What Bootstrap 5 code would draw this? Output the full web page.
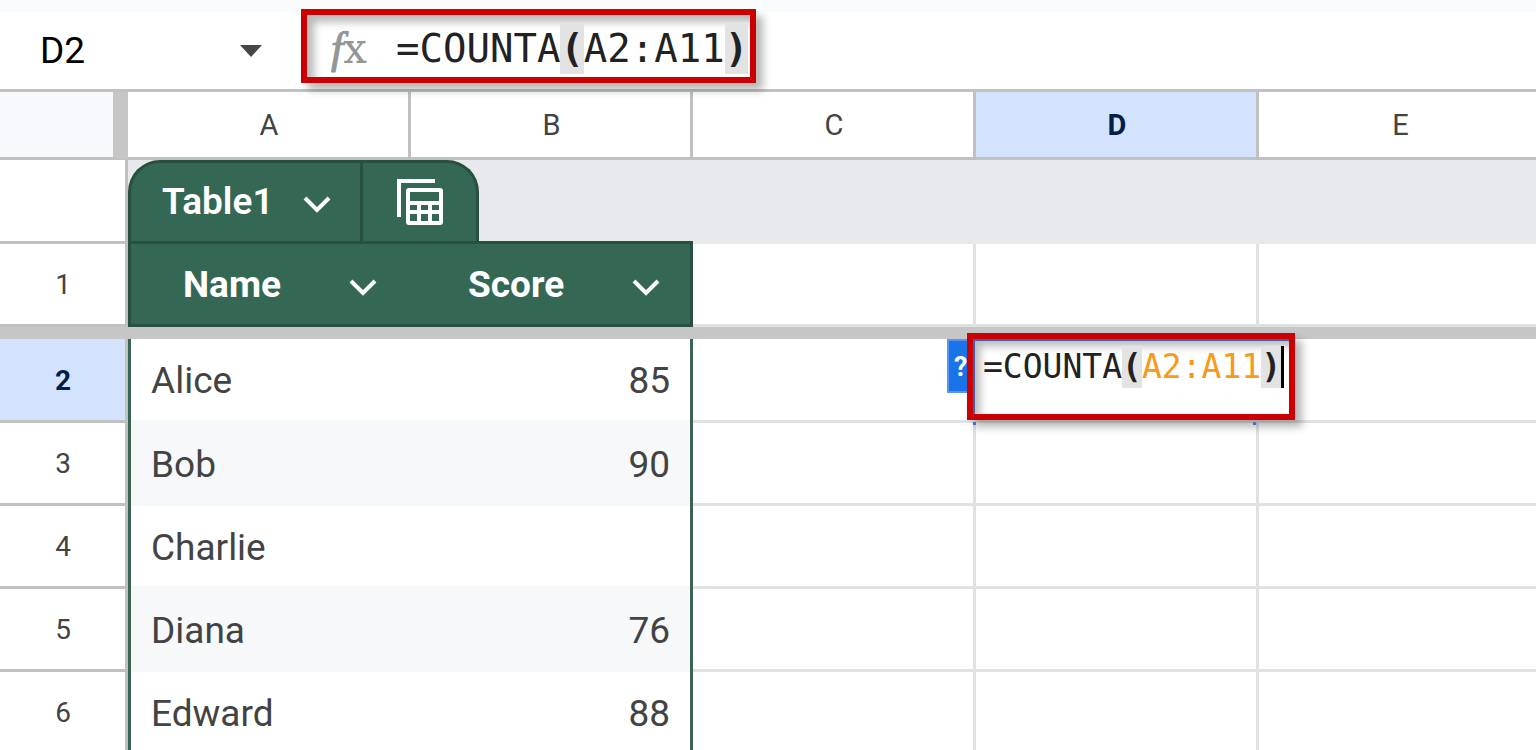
<!DOCTYPE html>
<html lang="en">
<head>
<meta charset="utf-8">
<meta name="viewport" content="width=device-width, initial-scale=1">
<title>Spreadsheet – COUNTA</title>
<link rel="stylesheet" href="https://cdn.jsdelivr.net/npm/bootstrap@5.3.0/dist/css/bootstrap.min.css">
<style>
  :root { --line: #c1c1c1; --grid: #e1e1e1; --green: #356854; --edge: #285040; --pick: #d3e2fd; --alert: #cc0000; }
  body { font-family: Roboto, "Liberation Sans", sans-serif; color: #434343; }
  .toolbar-edge { height: 12px; background: #f9fbfd; }
  .formula-bar { height: 80px; border-bottom: 3px solid var(--line); }
  .name-box { width: 301px; padding: 0 36px 0 40px; }
  .name-input { font-size: 37px; line-height: 48px; color: #000; min-width: 0; }
  .callout { border: 6px solid var(--alert); box-shadow: 7px 7px 8px rgba(0,0,0,.28), inset 7px 7px 8px rgba(0,0,0,.28); }
  .formula-box { height: 74px; margin-top: -3px; padding: 6px 2px 0 24px; }
  .fx-sign { font: italic 44px/48px "Liberation Serif", serif; color: #929694; width: 65px; -webkit-text-stroke: 1px #929694; }
  .fx-arg { font: 42px/48px "DejaVu Serif", serif; -webkit-text-stroke: 0; }
  .formula { font-family: "DejaVu Sans Mono", monospace; white-space: pre; outline: 0; color: #222; }
  .formula-lg { font-size: 39px; line-height: 50px; }
  .formula-md { font-size: 33px; line-height: 42px; }
  .paren { display: inline-block; background: #e3e3e3; font-weight: 700; }
  .range-ref { color: #f79a1c; }
  .sheet { table-layout: fixed; width: 100%; border-collapse: separate; border-spacing: 0; }
  .sheet th, .sheet td { padding: 0; vertical-align: middle; }
  .w-head { width: 128px; } .w-a { width: 283px; } .w-b { width: 282px; }
  .sheet thead th { height: 68px; padding-left: 2px; font-size: 29px; line-height: 36px; font-weight: 400; text-align: center; border-right: 3px solid var(--line); border-bottom: 3px solid var(--line); }
  .sheet thead .corner { background: #f8f9fc; border-right: 15px solid #c6c6c6; }
  .sheet thead th:last-child { padding-left: 6px; }
  .sheet tr > :last-child { border-right: 0; }
  .sheet tbody th { padding: 2px 0 0 1px; font-size: 28px; line-height: 36px; font-weight: 400; text-align: center; border-right: 3px solid var(--line); border-bottom: 3px solid var(--line); }
  .sheet thead .picked, .sheet tbody .picked { background: var(--pick); color: #041e49; font-weight: 700; }
  .band { height: 84px; background: #e8e9ed; }
  .band-tab { border-bottom: 3px solid var(--edge); }
  .sheet .band-tab { vertical-align: top; }
  .tab-pill { width: 351px; height: 81px; background: var(--green); border: 3px solid var(--edge); border-bottom: 0; border-radius: 32px 32px 0 0; overflow: hidden; }
  .tab-name { width: 232px; padding: 0 28px 0 31px; border-right: 3px solid var(--edge); font-size: 37px; line-height: 44px; font-weight: 600; }
  .chevron { margin-top: 4px; }
  .first-row > * { height: 83px; }
  .grid-cell { border-right: 3px solid var(--grid); border-bottom: 3px solid var(--grid); }
  .field { background: var(--green); border-bottom: 3px solid var(--edge); color: #fff; font-size: 37px; line-height: 44px; font-weight: 700; }
  .field-start { border-left: 3px solid var(--edge); } .field-end { border-right: 3px solid var(--edge); }
  .field > div { padding-top: 2px; }
  .field-start > div { padding-left: 52px; padding-right: 33px; } .field-end > div { padding-left: 57px; padding-right: 29px; }
  .freeze td { height: 12px; background: #c6c6c6; }
  .data-row > * { height: 83px; }
  .data-row.lead-row > * { height: 84px; }
  .entry { font-size: 37px; line-height: 44px; background: linear-gradient(#f6f8fa, #f6f8fa) bottom / 100% 3px no-repeat; }
  .sheet .entry-text { border-left: 3px solid #3c6453; padding-left: 20px; }
  .sheet .entry-num { border-right: 3px solid #3c6453; padding-right: 20px; text-align: right; }
  .shade { background: #f6f8fa; }
  .help-flag { top: 0; left: -29px; width: 30px; height: 54px; background: #1a73e8; border: 2px solid #5b92f5; font-size: 27px; line-height: 50px; font-weight: 700; color: #fff; z-index: 1; padding-left: 5px; text-align: left; }
  .cell-editor { top: -6px; left: -9px; height: 87px; padding: 7px 5px 0 10px; background: #fff; z-index: 2; }
  .cell-editor::before { content: ""; position: absolute; inset: 0; border: solid #4060b0; border-width: 2px 0 0 2px; }
  .cell-editor .formula { border-right: 3px solid #000; }
  .grip { top: 83px; width: 3px; height: 3px; background: #3f6fd0; z-index: 3; }
  .grip-start { left: -3px; } .grip-end { right: 0; }
</style>
</head>
<body class="bg-white">
<main class="vh-100 overflow-hidden">
  <div class="toolbar-edge"></div>
  <header class="formula-bar d-flex align-items-start">
    <div class="name-box d-flex align-items-center h-100 flex-shrink-0">
      <input class="name-input border-0 p-0 bg-transparent flex-grow-1" value="D2" aria-label="Name box">
      <button type="button" class="btn p-0 border-0 d-flex" aria-label="Named ranges">
        <svg width="27" height="14" viewBox="0 0 27 14"><path d="M2 1h22L13 13z" fill="#444746"/></svg>
      </button>
    </div>
    <div class="formula-box callout d-flex align-items-center position-relative z-3">
      <span class="fx-sign" aria-hidden="true">f<span class="fx-arg">x</span></span>
      <div class="formula formula-lg" role="textbox" contenteditable="true" spellcheck="false" aria-label="Formula bar">=COUNTA<span class="paren">(</span>A2:A11<span class="paren">)</span></div>
    </div>
  </header>

  <table class="sheet">
    <colgroup><col class="w-head"><col class="w-a"><col class="w-b"><col class="w-a"><col class="w-a"><col></colgroup>
    <thead>
      <tr><th class="corner"></th><th scope="col">A</th><th scope="col">B</th><th scope="col">C</th><th scope="col" class="picked">D</th><th scope="col">E</th></tr>
    </thead>
    <tbody>
      <tr>
        <th></th>
        <td class="band band-tab" colspan="2">
          <div class="tab-pill d-flex text-white">
            <button type="button" class="tab-name btn rounded-0 border-top-0 border-bottom-0 border-start-0 text-white d-flex align-items-center justify-content-between">Table1
              <svg class="chevron" width="30" height="18" viewBox="0 0 30 18"><path d="M3 3l12 12L27 3" fill="none" stroke="#fff" stroke-width="4"/></svg>
            </button>
            <button type="button" class="btn p-0 border-0 flex-grow-1 d-flex align-items-center justify-content-center" aria-label="Table views">
              <svg width="48" height="48" viewBox="0 0 48 48" fill="none" stroke="#fff"><path d="M3 39V3h36" stroke-width="4"/><rect x="12" y="12" width="33" height="33" rx="1" stroke-width="4"/><path d="M12 25h33M12 34h33M23 25v20M34 25v20" stroke-width="4"/></svg>
            </button>
          </div>
        </td>
        <td class="band" colspan="3"></td>
      </tr>
      <tr class="first-row">
        <th scope="row">1</th>
        <td class="field field-start"><div class="d-flex align-items-center justify-content-between">Name
          <button type="button" class="btn p-0 border-0 d-flex" aria-label="Name column menu"><svg class="chevron" width="30" height="18" viewBox="0 0 30 18"><path d="M3 3l12 12L27 3" fill="none" stroke="#fff" stroke-width="4"/></svg></button></div></td>
        <td class="field field-end"><div class="d-flex align-items-center justify-content-between">Score
          <button type="button" class="btn p-0 border-0 d-flex" aria-label="Score column menu"><svg class="chevron" width="30" height="18" viewBox="0 0 30 18"><path d="M3 3l12 12L27 3" fill="none" stroke="#fff" stroke-width="4"/></svg></button></div></td>
        <td class="grid-cell"></td><td class="grid-cell"></td><td class="grid-cell"></td>
      </tr>
      <tr class="freeze"><td colspan="6"></td></tr>
      <tr class="data-row lead-row">
        <th scope="row" class="picked">2</th><td class="entry entry-text">Alice</td><td class="entry entry-num">85</td>
        <td class="grid-cell"></td>
        <td class="grid-cell position-relative">
          <button type="button" class="help-flag position-absolute" aria-label="Formula help">?</button>
          <div class="cell-editor callout position-absolute">
            <div class="formula formula-md position-relative" role="textbox" contenteditable="true" spellcheck="false" aria-label="Cell D2">=COUNTA<span class="paren">(</span><span class="range-ref">A2:A11</span><span class="paren">)</span></div>
          </div>
          <span class="grip grip-start position-absolute"></span><span class="grip grip-end position-absolute"></span>
        </td>
        <td class="grid-cell"></td>
      </tr>
      <tr class="data-row">
        <th scope="row">3</th><td class="entry entry-text shade">Bob</td><td class="entry entry-num shade">90</td>
        <td class="grid-cell"></td><td class="grid-cell"></td><td class="grid-cell"></td>
      </tr>
      <tr class="data-row">
        <th scope="row">4</th><td class="entry entry-text">Charlie</td><td class="entry entry-num"></td>
        <td class="grid-cell"></td><td class="grid-cell"></td><td class="grid-cell"></td>
      </tr>
      <tr class="data-row">
        <th scope="row">5</th><td class="entry entry-text shade">Diana</td><td class="entry entry-num shade">76</td>
        <td class="grid-cell"></td><td class="grid-cell"></td><td class="grid-cell"></td>
      </tr>
      <tr class="data-row">
        <th scope="row">6</th><td class="entry entry-text">Edward</td><td class="entry entry-num">88</td>
        <td class="grid-cell"></td><td class="grid-cell"></td><td class="grid-cell"></td>
      </tr>
    </tbody>
  </table>
</main>
<script src="https://cdn.jsdelivr.net/npm/bootstrap@5.3.0/dist/js/bootstrap.bundle.min.js"></script>
</body>
</html>
